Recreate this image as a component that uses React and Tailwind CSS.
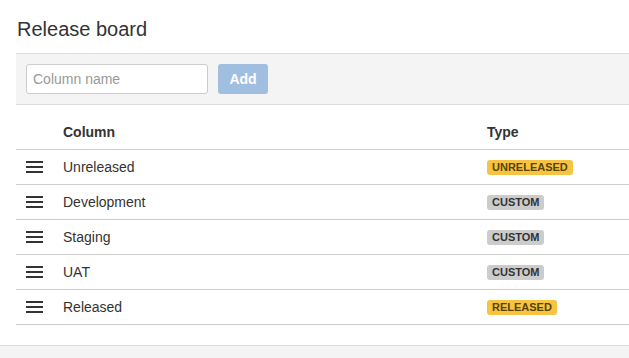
const rows = [
  { name: "Unreleased", type: "Unreleased", tone: "yellow" },
  { name: "Development", type: "Custom", tone: "gray" },
  { name: "Staging", type: "Custom", tone: "gray" },
  { name: "UAT", type: "Custom", tone: "gray" },
  { name: "Released", type: "Released", tone: "yellow" },
];

function Handle() {
  return (
    <svg width="17" height="14" viewBox="0 0 17 14" className="text-[#333]">
      <rect x="0" y="1" width="17" height="2" fill="currentColor" />
      <rect x="0" y="6" width="17" height="2" fill="currentColor" />
      <rect x="0" y="11" width="17" height="2" fill="currentColor" />
    </svg>
  );
}

function Lozenge({ tone, children }) {
  const colors =
    tone === "yellow"
      ? "bg-[#f6c342] text-[#594300]"
      : "bg-[#cccccc] text-[#333333]";
  return (
    <span
      className={`inline-block h-[15px] px-[5px] rounded-[3px] text-[11px] leading-[15px] font-bold uppercase ${colors}`}
    >
      {children}
    </span>
  );
}

export default function App() {
  return (
    <div className="w-[629px] h-[358px] overflow-hidden bg-white flex flex-col font-['Liberation_Sans',Arial,sans-serif] text-[#333]">
      <div className="pl-4 flex-1">
        <h2 className="pt-[17px] mb-3 text-[20px] leading-6 pl-px">Release board</h2>

        {/* toolbar */}
        <div className="flex items-center gap-[10px] px-[10px] py-[10px] bg-[#f4f4f4] border-y border-[#dcdcdc]">
          <input
            className="w-[182px] h-[30px] px-[6px] bg-white border border-[#cccccc] rounded-[3px] text-[14px] placeholder-[#999] outline-none"
            placeholder="Column name"
          />
          <button className="w-[50px] h-[30px] rounded-[3px] bg-[#a0bfe0] text-white text-[14px] font-bold">
            Add
          </button>
        </div>

        {/* table */}
        <div className="grid grid-cols-[37px_424px_1fr] text-[14px] leading-5">
          <div className="border-b border-[#cccccc]" />
          <div className="pl-[10px] pt-[17px] pb-[7px] font-bold border-b border-[#cccccc]">Column</div>
          <div className="pl-[10px] pt-[17px] pb-[7px] font-bold border-b border-[#cccccc]">Type</div>

          {rows.map((r) => (
            <div key={r.name} className="contents">
              <div className="pl-[10px] h-[35px] flex items-center border-b border-[#cccccc]">
                <Handle />
              </div>
              <div className="pl-[10px] h-[35px] flex items-center border-b border-[#cccccc]">{r.name}</div>
              <div className="pl-[10px] h-[35px] flex items-center border-b border-[#cccccc]">
                <Lozenge tone={r.tone}>{r.type}</Lozenge>
              </div>
            </div>
          ))}
        </div>
      </div>

      <div className="h-[13px] shrink-0 bg-[#f4f4f4] border-t border-[#dcdcdc]" />
    </div>
  );
}
